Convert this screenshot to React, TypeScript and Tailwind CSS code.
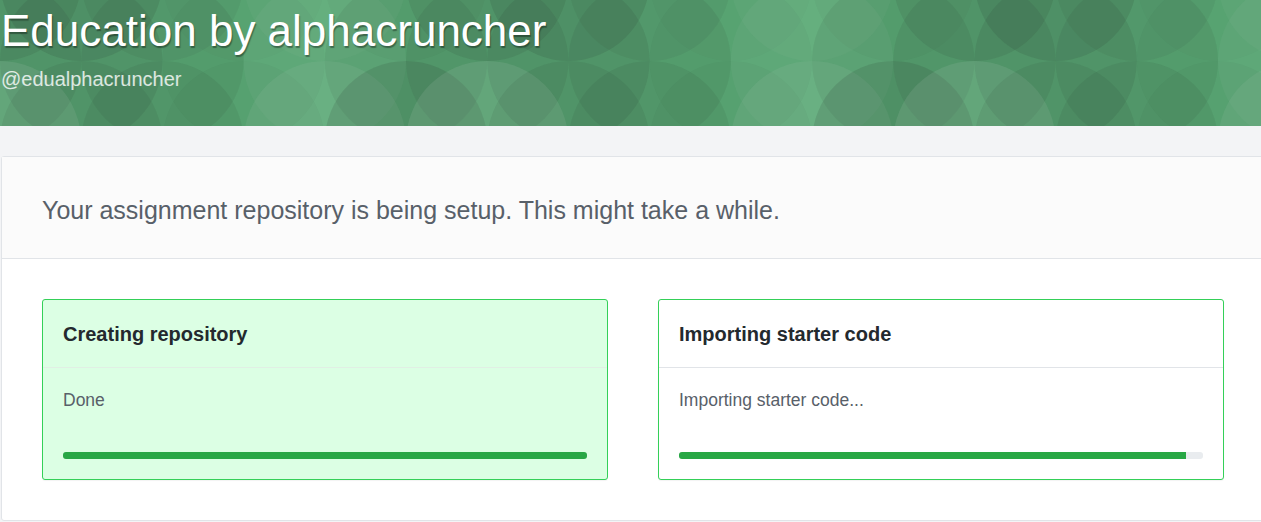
const R = 81.2;

// overlapping circles, three visible rows of the six column tile: [fill, opacity]
const rows: { y: number; cells: [string, number][] }[] = [
  {
    y: -20.2,
    cells: [
      ["#222", 0.09],
      ["#222", 0.1],
      ["#222", 0.06],
      ["#222", 0.02],
      ["#ddd", 0.04],
      ["#222", 0.03],
    ],
  },
  {
    y: 61,
    cells: [
      ["#222", 0.08],
      ["#222", 0.09],
      ["#222", 0.08],
      ["#222", 0.03],
      ["#ddd", 0.05],
      ["#222", 0.07],
    ],
  },
  {
    y: 142.2,
    cells: [
      ["#ddd", 0.1],
      ["#222", 0.07],
      ["#222", 0.07],
      ["#222", 0.03],
      ["#ddd", 0.08],
      ["#222", 0.12],
    ],
  },
];

const columns = Array.from({ length: 17 }, (_, i) => i);

function HeroPattern() {
  return (
    <svg className="absolute inset-0 h-full w-full" width="1261" height="126">
      {rows.map((row) =>
        columns.map((c) => {
          const [fill, opacity] = row.cells[c % 6];
          return <circle key={`${row.y}-${c}`} cx={c * R} cy={row.y} r={R} fill={fill} fillOpacity={opacity} />;
        }),
      )}
    </svg>
  );
}

function ProgressCard({
  title,
  status,
  percent,
  done,
}: {
  title: string;
  status: string;
  percent: number;
  done?: boolean;
}) {
  return (
    <div className={`h-[181px] rounded-[3px] border border-[#34d058] shadow-[0_1px_1px_rgba(0,0,0,0.05)] ${done ? "bg-[#dcffe4]" : "bg-white"}`}>
      <div className={`flex h-[68px] items-center border-b px-5 ${done ? "border-[#e1efe4]" : "border-[#e1e4e8]"}`}>
        <h3 className="text-[20px] leading-6 font-bold text-[#24292e]">{title}</h3>
      </div>
      <div className="px-5 pt-[20px]">
        <p className="text-[17.5px] leading-6 text-[#586069]">{status}</p>
        <div className="mt-[40px] h-[7px] overflow-hidden rounded-[3px] bg-[#e9ecef]">
          <div className="h-full bg-[#28a745]" style={{ width: `${percent}%` }} />
        </div>
      </div>
    </div>
  );
}

export default function App() {
  return (
    <div className="h-[522px] w-[1261px] overflow-hidden bg-[#f3f4f6] font-['Liberation_Sans',Arial,sans-serif]">
      <div className="relative h-[126px] overflow-hidden bg-[#5aab76]">
        <HeroPattern />
        <div className="relative pt-[5px] pl-[1px] text-white">
          <h1 className="text-[44px] leading-[52px] font-normal [text-shadow:1px_2px_1px_rgba(0,0,0,0.35)]">
            Education by alphacruncher
          </h1>
          <p className="mt-[10px] text-[20px] leading-6 text-white/80">@edualphacruncher</p>
        </div>
      </div>

      <div className="mt-[30px] ml-[1px] h-[365px] w-[1300px] rounded-[3px] border border-[#e1e4e8] bg-white">
        <div className="flex h-[102px] items-center border-b border-[#e1e4e8] bg-[#fbfbfb] px-10 pt-[5px]">
          <p className="text-[25px] leading-8 text-[#586069]">Your assignment repository is being setup. This might take a while.</p>
        </div>
        <div className="grid w-[1262px] grid-cols-2 gap-[50px] px-10 pt-10">
          <ProgressCard title="Creating repository" status="Done" percent={100} done />
          <ProgressCard title="Importing starter code" status="Importing starter code..." percent={96.7} />
        </div>
      </div>
    </div>
  );
}
